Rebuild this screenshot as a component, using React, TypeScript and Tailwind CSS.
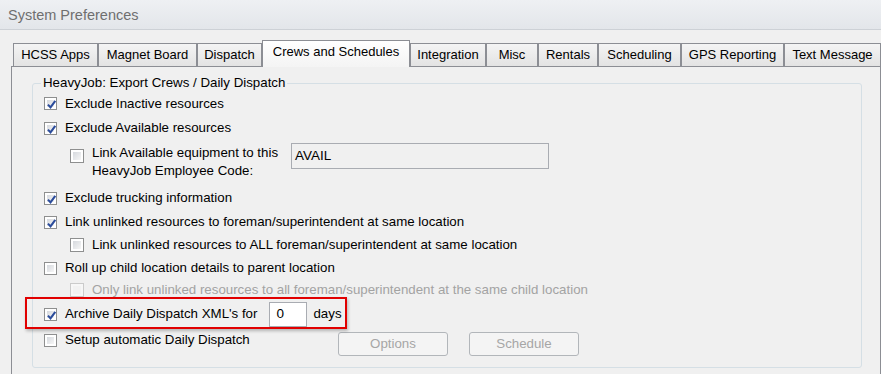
import React from 'react';

const TABS = [
  { label: 'HCSS Apps', w: 'w-[85px]' },
  { label: 'Magnet Board', w: 'w-[99px]' },
  { label: 'Dispatch', w: 'w-[65px]' },
  { label: 'Crews and Schedules', w: 'w-[148px]', active: true },
  { label: 'Integration', w: 'w-[76px]' },
  { label: 'Misc', w: 'w-[52px]' },
  { label: 'Rentals', w: 'w-[60px]' },
  { label: 'Scheduling', w: 'w-[83px]' },
  { label: 'GPS Reporting', w: 'w-[103px]' },
  { label: 'Text Message', w: 'w-[97px]' },
];

const CheckBox = ({ checked = false, disabled = false, big = false }: { checked?: boolean; disabled?: boolean; big?: boolean }) => (
  <div
    className={`${big ? 'w-[14px] h-[14px]' : 'w-[13px] h-[13px]'} shrink-0 border p-[2px] ${
      disabled ? 'border-[#cbcbcb] bg-[#f7f7f7]' : 'border-[#8e8f8f] bg-white'
    }`}
  >
    <div
      className={`relative w-full h-full ${
        disabled ? 'bg-[#f2f2f2]' : 'bg-gradient-to-br from-[#d6d9de] to-[#f6f6f6]'
      }`}
    >
      {checked && (
        <svg viewBox="0 0 9 9" className="absolute -inset-[1px] w-[11px] h-[11px]">
          <path d="M1.6 4.6 L3.7 6.9 L7.6 1.6" fill="none" stroke="#2b4c9b" strokeWidth="1.7" />
        </svg>
      )}
    </div>
  </div>
);

const Row = ({
  h,
  indent = false,
  checked = false,
  disabled = false,
  children,
}: {
  h: string;
  indent?: boolean;
  checked?: boolean;
  disabled?: boolean;
  children: React.ReactNode;
}) => (
  <div className={`flex items-center ${h} ${indent ? 'pl-[37px]' : 'pl-[11px]'}`}>
    <CheckBox checked={checked} disabled={disabled} big={indent} />
    <span className={`ml-[8px] whitespace-nowrap ${disabled ? 'text-[#a3a3a3]' : 'text-black'}`}>{children}</span>
  </div>
);

export default function App() {
  return (
    <div
      className="w-[881px] h-[374px] overflow-hidden bg-[#f0f0f0] text-[13px] leading-[16px]"
      style={{ fontFamily: '"Liberation Sans", Arial, sans-serif' }}
    >
      {/* title bar */}
      <div className="h-[30px] flex items-center pl-[8px] border-b border-[#cdd1d6] bg-gradient-to-b from-[#eef0f3] to-[#e3e6ea]">
        <span className="text-[14.5px] text-[#6f6f6f]">System Preferences</span>
      </div>

      {/* tabs */}
      <div className="pl-[13px] flex items-end h-[36px]">
        {TABS.map(t =>
          t.active ? (
            <div
              key={t.label}
              className={`${t.w} h-[27px] -mb-px relative z-10 flex items-center justify-center border border-b-0 border-[#8c8e94] bg-gradient-to-b from-white to-[#f4f4f4] pb-[4px]`}
            >
              {t.label}
            </div>
          ) : (
            <div
              key={t.label}
              className={`${t.w} h-[23px] flex items-center justify-center border border-b-0 border-[#8c8e94] bg-gradient-to-b from-[#f4f4f4] to-[#e3e3e3]`}
            >
              {t.label}
            </div>
          ),
        )}
      </div>

      {/* tab panel */}
      <div className="ml-[11px] border-l border-t border-r border-[#8c8e94] h-[320px] pt-[8px] pl-[20px] pr-[18px] text-[13.3px]">
        <fieldset className="h-[293px] border border-[#d5dfe5] rounded-[3px] p-0 m-0">
          <legend className="ml-[8px] px-[2px] leading-[16px]">HeavyJob: Export Crews / Daily Dispatch</legend>

          <Row h="h-[25px]" checked>Exclude Inactive resources</Row>
          <Row h="h-[24px]" checked>Exclude Available resources</Row>

          <div className="flex items-start h-[46px] pt-[3px] pl-[37px]">
            <div className="mt-[6px]">
              <CheckBox big />
            </div>
            <div className="ml-[8px] w-[199px] mt-[1px] leading-[18px]">
              <div>Link Available equipment to this</div>
              <div>HeavyJob Employee Code:</div>
            </div>
            <div className="w-[258px] h-[26px] border border-[#a9acb2] bg-[#f0f0f0] flex items-center pl-[3px] text-[13.5px]">
              AVAIL
            </div>
          </div>

          <Row h="h-[24px]" checked>Exclude trucking information</Row>
          <Row h="h-[24px]" checked>Link unlinked resources to foreman/superintendent at same location</Row>
          <Row h="h-[22px]" indent>Link unlinked resources to ALL foreman/superintendent at same location</Row>
          <Row h="h-[24px]">Roll up child location details to parent location</Row>
          <Row h="h-[20px]" indent disabled>
            Only link unlinked resources to all foreman/superintendent at the same child location
          </Row>

          <div className="relative flex items-center h-[28px] pl-[11px]">
            <div className="absolute left-[-8px] top-[-3px] w-[322px] h-[32px] border-2 border-[#e10000] shadow-[1px_2px_3px_rgba(0,0,0,0.25)]" />
            <CheckBox checked />
            <span className="ml-[8px] whitespace-nowrap">Archive Daily Dispatch XML's for</span>
            <div className="ml-[12px] w-[38px] h-[25px] border border-[#a9acb2] bg-white flex items-center pl-[6px] text-[13.5px]">
              0
            </div>
            <span className="ml-[6px]">days</span>
          </div>

          <div className="flex items-start pl-[11px]">
            <div className="flex items-center h-[24px] w-[294px]">
              <CheckBox />
              <span className="ml-[8px] whitespace-nowrap">Setup automatic Daily Dispatch</span>
            </div>
            <div className="mt-[4px] w-[110px] h-[24px] rounded-[3px] border border-[#b2b6ba] bg-[#f4f4f4] flex items-center justify-center text-[#a6a6a6]">
              Options
            </div>
            <div className="ml-[21px] mt-[4px] w-[110px] h-[24px] rounded-[3px] border border-[#b2b6ba] bg-[#f4f4f4] flex items-center justify-center text-[#a6a6a6]">
              Schedule
            </div>
          </div>
        </fieldset>
      </div>
    </div>
  );
}
